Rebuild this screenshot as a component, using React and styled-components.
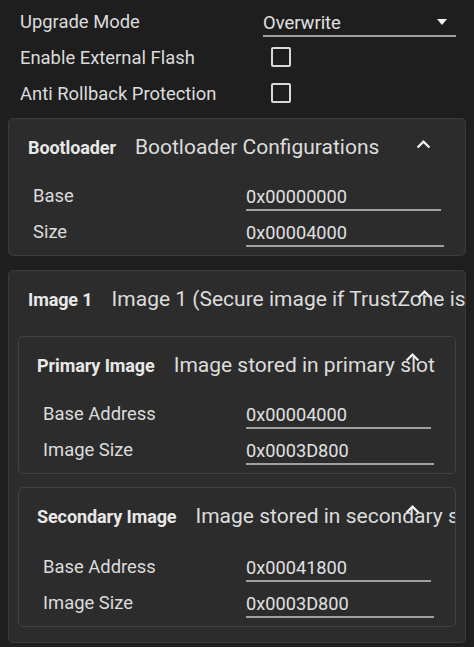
import React from "react";
import styled, { createGlobalStyle } from "styled-components";

const Global = createGlobalStyle`
  html, body { margin: 0; padding: 0; background: #1e1e1e; }
  body { font-family: Roboto, "Noto Sans", "Liberation Sans", sans-serif; color: #dedede; }
  * { box-sizing: border-box; }
`;

const Page = styled.div`
  width: 474px;
  padding: 3px 0 7px;
`;

const TopRow = styled.div`
  display: grid;
  grid-template-columns: 243px 1fr;
  align-items: center;
  height: 36px;
  padding-left: 20px;
`;

const Label = styled.span`
  font-size: 18.4px;
  color: #dcdcdc;
  white-space: nowrap;
`;

const Select = styled.div`
  width: 193px;
  height: 28px;
  display: flex;
  align-items: center;
  justify-content: space-between;
  border-bottom: 2px solid #a0a0a0;
  font-size: 18.4px;
  color: #e0e0e0;
  padding-right: 9px;
  margin-top: 4px;
`;

const Caret = styled.span`
  width: 0;
  height: 0;
  border-left: 5px solid transparent;
  border-right: 5px solid transparent;
  border-top: 6px solid #f2f2f2;
`;

const Checkbox = styled.span`
  margin-left: 8px;
  width: 20px;
  height: 20px;
  border: 2px solid #d8d8d8;
  border-radius: 2px;
`;

const Card = styled.section`
  position: relative;
  overflow: hidden;
  background: #2c2c2c;
  border: 1px solid ${(p) => (p.$inner ? "#424242" : "#3b3b3b")};
  border-radius: 5px;
  margin: ${(p) => p.$margin};
  padding: 0 6px ${(p) => p.$pb}px 0;
`;

const Header = styled.div`
  position: relative;
  display: flex;
  align-items: baseline;
  gap: 19px;
  height: ${(p) => p.$h}px;
  padding: ${(p) => p.$pt}px 0 0 ${(p) => p.$pl}px;
  white-space: nowrap;
`;

const Title = styled.span`
  font-size: 18px;
  font-weight: 700;
  letter-spacing: -0.1px;
  color: #e8e8e8;
`;

const Subtitle = styled.span`
  font-size: 21px;
  color: #dcdcdc;
`;

const Chevron = styled.svg`
  position: absolute;
  right: ${(p) => p.$right}px;
  top: ${(p) => p.$top}px;
  width: 27px;
  height: 27px;
  fill: #f0f0f0;
`;

const Field = styled.div`
  display: grid;
  grid-template-columns: 1fr 1fr;
  align-items: center;
  height: 36px;
  padding-left: 24px;
`;

const Input = styled.div`
  height: 28px;
  margin-top: 4px;
  margin-right: ${(p) => p.$mr}px;
  display: flex;
  align-items: center;
  border-bottom: 2px solid #a0a0a0;
  font-size: 18.2px;
  color: #e0e0e0;
`;

const Up = ({ top, right }) => (
  <Chevron viewBox="0 0 24 24" $top={top} $right={right}>
    <path d="M12 8l-6 6 1.41 1.41L12 10.83l4.59 4.58L18 14z" />
  </Chevron>
);

const FieldRow = ({ label, value, mr }) => (
  <Field>
    <Label>{label}</Label>
    <Input $mr={mr}>{value}</Input>
  </Field>
);

export default function App() {
  return (
    <Page>
      <Global />
      <TopRow>
        <Label>Upgrade Mode</Label>
        <Select>
          <span>Overwrite</span>
          <Caret />
        </Select>
      </TopRow>
      <TopRow>
        <Label>Enable External Flash</Label>
        <Checkbox />
      </TopRow>
      <TopRow>
        <Label>Anti Rollback Protection</Label>
        <Checkbox />
      </TopRow>

      <Card $margin="7px 8px 0 8px" $pb={6}>
        <Header $h={58} $pt={16} $pl={19}>
          <Title>Bootloader</Title>
          <Subtitle>Bootloader Configurations</Subtitle>
          <Up top={12} right={22} />
        </Header>
        <FieldRow label="Base" value="0x00000000" mr={18} />
        <FieldRow label="Size" value="0x00004000" mr={15} />
      </Card>

      <Card $margin="14px 8px 0 8px" $pb={15}>
        <Header $h={65} $pt={16} $pl={19}>
          <Title>Image 1</Title>
          <Subtitle>Image 1 (Secure image if TrustZone is enabled)</Subtitle>
          <Up top={10} right={21} />
        </Header>
        <Card $inner $margin="0 3px 0 9px" $pb={6}>
          <Header $h={58} $pt={16} $pl={18}>
            <Title>Primary Image</Title>
            <Subtitle>Image stored in primary slot</Subtitle>
            <Up top={7} right={23} />
          </Header>
          <FieldRow label="Base Address" value="0x00004000" mr={18} />
          <FieldRow label="Image Size" value="0x0003D800" mr={15} />
        </Card>
        <Card $inner $margin="13px 3px 0 9px" $pb={6}>
          <Header $h={60} $pt={16} $pl={18}>
            <Title>Secondary Image</Title>
            <Subtitle>Image stored in secondary slot</Subtitle>
            <Up top={8} right={23} />
          </Header>
          <FieldRow label="Base Address" value="0x00041800" mr={18} />
          <FieldRow label="Image Size" value="0x0003D800" mr={15} />
        </Card>
      </Card>
    </Page>
  );
}
